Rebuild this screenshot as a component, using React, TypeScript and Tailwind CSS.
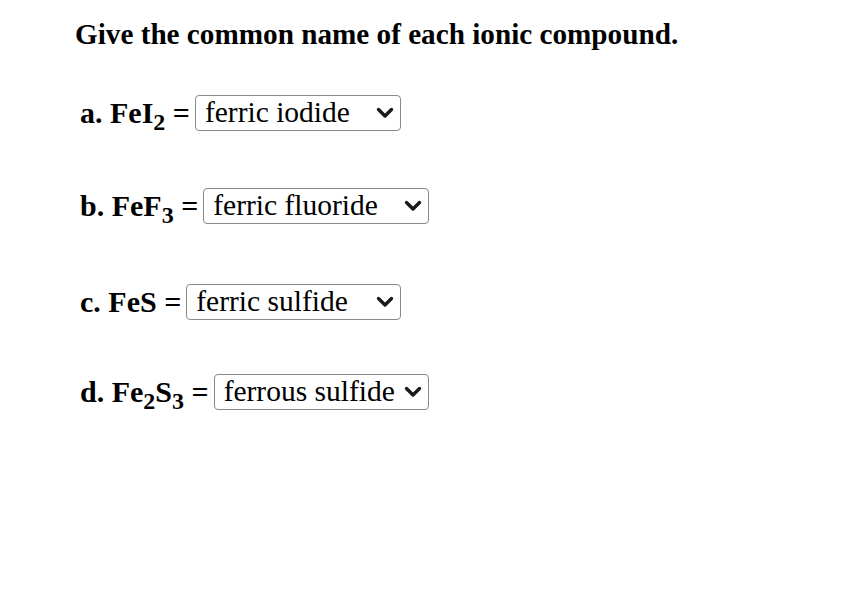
import React from "react";

interface Row {
    letter: string,
    formula: React.ReactNode,
    answer: string,
    boxWidth: string,
    gapAfter: string,
}

const Chevron = () => (
    <svg width="18" height="12" viewBox="0 0 18 12" className="shrink-0">
        <path d="M2.5 2.5 L9 9 L15.5 2.5" fill="none" stroke="#1a1a1a" strokeWidth="3.4" strokeLinecap="round" strokeLinejoin="round" />
    </svg>
);

const Sub = ({ children }: { children: React.ReactNode }) => (
    <span className="text-[24px] leading-none relative top-[7px]">{children}</span>
);

const rows: Row[] = [
    { letter: "a.", formula: <>FeI<Sub>2</Sub></>, answer: "ferric iodide", boxWidth: "w-[206px]", gapAfter: "mb-[57px]" },
    { letter: "b.", formula: <>FeF<Sub>3</Sub></>, answer: "ferric fluoride", boxWidth: "w-[226px]", gapAfter: "mb-[60px]" },
    { letter: "c.", formula: <>FeS</>, answer: "ferric sulfide", boxWidth: "w-[215px]", gapAfter: "mb-[54px]" },
    { letter: "d.", formula: <>Fe<Sub>2</Sub>S<Sub>3</Sub></>, answer: "ferrous sulfide", boxWidth: "w-[215px]", gapAfter: "" },
];

const App: React.FC = () => {
    return (
        <div className="w-[862px] h-[594px] bg-white text-black font-['Liberation_Serif','Times_New_Roman',serif]">
            <div className="pl-[75px] pt-[17px]">
                <h1 className="text-[29.2px] font-bold leading-[34px]">
                    Give the common name of each ionic compound.
                </h1>
                <div className="mt-[44px] pl-[5px]">
                    {rows.map((r) => (
                        <div key={r.letter} className={`flex items-center h-[36px] ${r.gapAfter}`}>
                            <span className="text-[30px] font-bold leading-none whitespace-nowrap">
                                {r.letter} {r.formula} =
                            </span>
                            <div className={`ml-[5px] ${r.boxWidth} h-[36px] border border-[#8a8a8a] rounded-[4px] flex items-center justify-between pl-[9px] pr-[6px]`}>
                                <span className="text-[29.5px] leading-none whitespace-nowrap">{r.answer}</span>
                                <Chevron />
                            </div>
                        </div>
                    ))}
                </div>
            </div>
        </div>
    );
};

export default App;
